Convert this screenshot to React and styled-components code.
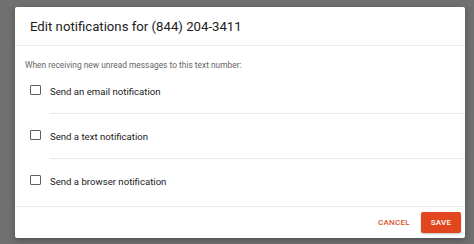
import styled, { createGlobalStyle } from "styled-components";

const GlobalStyle = createGlobalStyle`
  html, body {
    margin: 0;
    padding: 0;
    background: #707070;
    font-family: Roboto, "Liberation Sans", sans-serif;
  }
`;

const options = [
  "Send an email notification",
  "Send a text notification",
  "Send a browser notification",
];

export default function App() {
  return (
    <>
      <GlobalStyle />
      <Page>
        <Dialog>
          <Header>Edit notifications for (844) 204-3411</Header>
          <Body>
            <Intro>When receiving new unread messages to this text number:</Intro>
            {options.map((label, i) => (
              <Row key={label} last={i === options.length - 1}>
                <Box />
                <Label>{label}</Label>
              </Row>
            ))}
          </Body>
          <Footer>
            <TextButton>Cancel</TextButton>
            <SaveButton>Save</SaveButton>
          </Footer>
        </Dialog>
      </Page>
    </>
  );
}

const Page = styled.div`
  width: 474px;
  height: 244px;
  padding: 7px 9px 0 15px;
  box-sizing: border-box;
  background: #707070;
`;

const Dialog = styled.div`
  width: 450px;
  height: 231px;
  background: #fff;
  border-radius: 2px;
  box-shadow: 0 2px 6px rgba(0, 0, 0, 0.3);
  display: flex;
  flex-direction: column;
`;

const Header = styled.div`
  flex-shrink: 0;
  height: 39px;
  box-sizing: border-box;
  padding: 0 0 0 15px;
  display: flex;
  align-items: center;
  font-size: 13.2px;
  color: #212121;
  border-bottom: 1px solid #eeeeee;
`;

const Body = styled.div`
  flex: 1;
  display: flex;
  flex-direction: column;
  padding-top: 14px;
`;

const Intro = styled.div`
  padding-left: 10px;
  font-size: 8.4px;
  color: #666666;
  line-height: 10px;
  margin-bottom: -1px;
`;

const Row = styled.div`
  flex-shrink: 0;
  height: 45px;
  box-sizing: border-box;
  display: flex;
  align-items: center;
  padding: 0 0 0 15px;
  position: relative;
  &::after {
    content: "";
    display: ${(p) => (p.last ? "none" : "block")};
    position: absolute;
    left: 35px;
    right: 0;
    bottom: 0;
    border-bottom: 1px solid #e8e8e8;
  }
`;

const Box = styled.span`
  width: 8.5px;
  height: 8.5px;
  border: 1.3px solid #5f5f5f;
  border-radius: 1px;
  flex-shrink: 0;
  margin-top: -3px;
`;

const Label = styled.span`
  margin-left: 9.5px;
  font-size: 9.6px;
  color: #212121;
  line-height: 12px;
`;

const Footer = styled.div`
  flex-shrink: 0;
  height: 32px;
  box-sizing: border-box;
  border-top: 1px solid #eeeeee;
  display: flex;
  align-items: center;
  justify-content: flex-end;
  gap: 11px;
  padding-right: 4px;
`;

const TextButton = styled.button`
  border: none;
  background: none;
  padding: 0;
  font-family: inherit;
  font-size: 8px;
  font-weight: 500;
  text-transform: uppercase;
  letter-spacing: 0.3px;
  color: #d9532a;
`;

const SaveButton = styled.button`
  border: none;
  width: 40px;
  height: 21px;
  border-radius: 2px;
  background: #e2461e;
  color: #fff;
  font-family: inherit;
  font-size: 8px;
  font-weight: 500;
  text-transform: uppercase;
  letter-spacing: 0.3px;
  box-shadow: 0 1px 2px rgba(0, 0, 0, 0.25);
`;
